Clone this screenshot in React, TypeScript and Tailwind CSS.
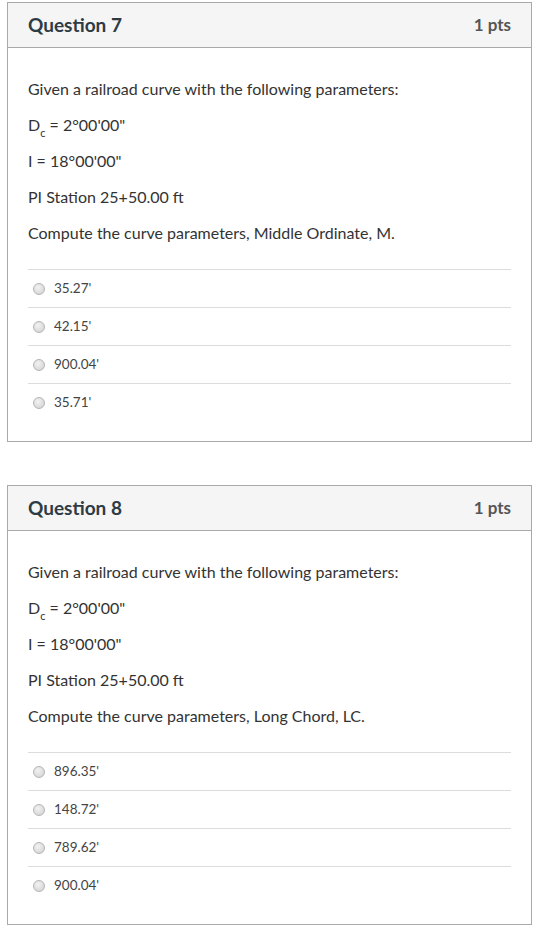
import React from "react";

interface Question {
  number: number;
  points: string;
  ask: string;
  answers: string[];
}

const questions: Question[] = [
  {
    number: 7,
    points: "1 pts",
    ask: "Compute the curve parameters, Middle Ordinate, M.",
    answers: ["35.27'", "42.15'", "900.04'", "35.71'"],
  },
  {
    number: 8,
    points: "1 pts",
    ask: "Compute the curve parameters, Long Chord, LC.",
    answers: ["896.35'", "148.72'", "789.62'", "900.04'"],
  },
];

const Radio = () => (
  <span className="inline-block w-[12px] h-[12px] rounded-full border border-[#b5b5b5] bg-[radial-gradient(circle_at_40%_35%,_#f2f2f2,_#cfcfcf)] shrink-0" />
);

const QuestionCard = ({ q }: { q: Question }) => (
  <div className="w-[525px] border border-[#a9a9a9] bg-white">
    <div className="h-[45px] flex items-center justify-between px-5 bg-[#f5f5f5] border-b border-[#a9a9a9]">
      <span className="text-[19px] font-bold text-[#2d3b45]">Question {q.number}</span>
      <span className="text-[17px] font-bold text-[#555]">{q.points}</span>
    </div>
    <div className="px-5 pt-[30px] pb-[20px] text-[16px] leading-[21px] text-[#333]">
      <p className="mb-[15px]">Given a railroad curve with the following parameters:</p>
      <p className="mb-[15px]">
        D<sub className="text-[11px] align-[-3px]">c</sub> = 2°00'00"
      </p>
      <p className="mb-[15px]">I = 18°00'00"</p>
      <p className="mb-[15px]">PI Station 25+50.00 ft</p>
      <p className="mb-[26px]">{q.ask}</p>
      <div>
        {q.answers.map((a) => (
          <div
            key={a}
            className="h-[38px] flex items-center gap-[9px] pl-[5px] border-t border-[#dcdcdc] text-[13.5px] text-[#444]"
          >
            <Radio />
            <span>{a}</span>
          </div>
        ))}
      </div>
    </div>
  </div>
);

export default function App() {
  return (
    <div
      className="pt-[2px] pl-[7px] bg-white min-h-[940px]"
      style={{ fontFamily: "Lato, 'Liberation Sans', sans-serif" }}
    >
      <QuestionCard q={questions[0]} />
      <div className="mt-[43px]">
        <QuestionCard q={questions[1]} />
      </div>
    </div>
  );
}
